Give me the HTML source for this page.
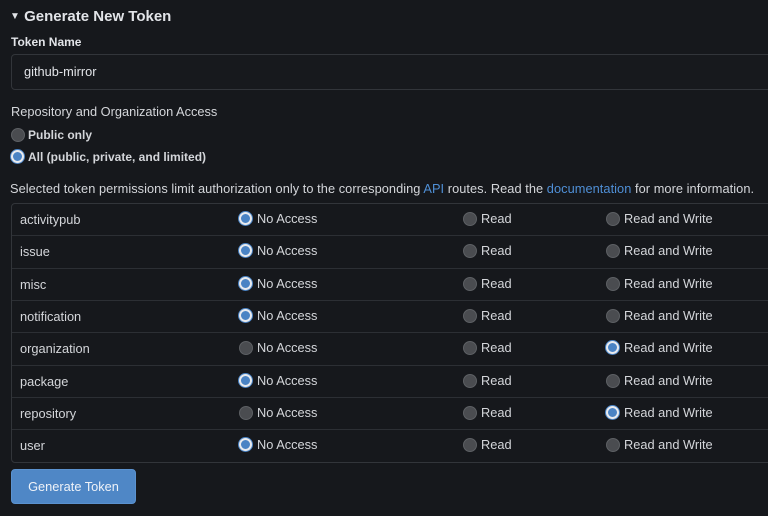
<!DOCTYPE html>
<html><head><style>
body{margin:0;background:#16181c;font-family:"Liberation Sans",sans-serif;font-size:12.8px;color:#d4d6da;width:768px;height:516px;overflow:hidden;position:relative}
.a{position:absolute;white-space:nowrap}
.r{position:absolute;width:12px;height:12px;border-radius:50%;background:#4a4c50;border:1px solid #5d6064}
.r.on{background:#4a83c4;border:2px solid #e8eaee;width:9px;height:9px;box-shadow:0 0 0 1px #4a83c4}
.row{position:absolute;left:12px;width:770px;height:32px;border-top:1px solid #2c2f34}
a{color:#4f8fd6;text-decoration:none}
</style></head><body>
<div class="a" style="left:10px;top:8px;font-size:15px;font-weight:bold;color:#e2e4e8"><span style="font-size:10px;position:relative;top:-2px">▼</span> Generate New Token</div>
<div class="a" style="left:11px;top:35px;font-weight:bold;font-size:12px;color:#e2e4e8">Token Name</div>
<div style="position:absolute;left:11px;top:54px;width:780px;height:34px;border:1px solid #32353a;border-radius:4px;background:#17191d"></div>
<div class="a" style="left:24px;top:64px;color:#e2e4e8">github-mirror</div>
<div class="a" style="left:11px;top:104px">Repository and Organization Access</div>
<div class="r" style="left:11px;top:128px"></div><div class="a" style="left:28px;top:128px;font-weight:bold;font-size:12px">Public only</div>
<div class="r on" style="left:11px;top:150px"></div><div class="a" style="left:28px;top:150px;font-weight:bold;font-size:12px">All (public, private, and limited)</div>
<div class="a" style="left:10px;top:181px;letter-spacing:0.05px">Selected token permissions limit authorization only to the corresponding <a>API</a> routes. Read the <a>documentation</a> for more information.</div>
<div style="position:absolute;left:11px;top:203px;width:780px;height:258px;border:1px solid #32353a;border-radius:4px"></div>
<div id="t"></div>
<div style="position:absolute;left:11px;top:469px;width:123px;height:33px;background:#4f87c6;border-radius:4px;border:1px solid #5b92cf;color:#eef2f8;text-align:center;line-height:33px">Generate Token</div>
<script>
var rows=[["activitypub",0],["issue",0],["misc",0],["notification",0],["organization",2],["package",0],["repository",2],["user",0]];
var h="";rows.forEach(function(r,i){var y=203+i*32.3;
if(i>0)h+='<div class="row" style="top:'+y+'px"></div>';
var ty=y+9;h+='<div class="a" style="left:20px;top:'+ty+'px">'+r[0]+'</div>';
[[239,"No Access"],[463,"Read"],[606,"Read and Write"]].forEach(function(c,j){
h+='<div class="r'+(r[1]==j?' on':'')+'" style="left:'+c[0]+'px;top:'+(y+9)+'px"></div><div class="a" style="left:'+(c[0]+18)+'px;top:'+(ty-1)+'px">'+c[1]+'</div>';});});
document.getElementById("t").innerHTML=h;
</script>
</body></html>
